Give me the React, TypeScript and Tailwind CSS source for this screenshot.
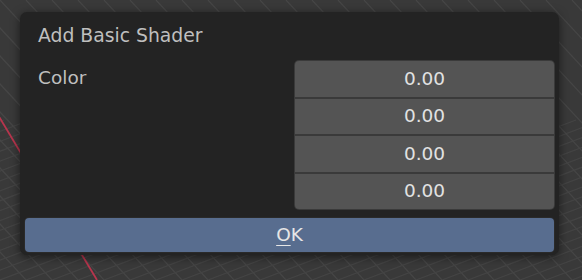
import React from "react"

const values = ["0.00", "0.00", "0.00", "0.00"]

function ViewportGrid() {
    // perspective floor grid, drawn behind the popup
    const a: React.ReactElement[] = []
    for (let i = -30; i < 40; i++) {
        const x = i * 26
        a.push(<line key={"a" + i} x1={x} y1={0} x2={x + 260} y2={280} stroke="#464646" strokeWidth={1.2} />)
        a.push(<line key={"b" + i} x1={x} y1={280} x2={x + 420} y2={120} stroke="#444444" strokeWidth={1.2} />)
    }
    return (
        <svg className="absolute inset-0" width={582} height={280}>
            <rect width={582} height={280} fill="#393939" />
            {a}
            <line x1={-71} y1={0} x2={97} y2={280} stroke="#b8354d" strokeWidth={1.8} />
        </svg>
    )
}

export default function App() {
    return (
        <div
            className="relative w-[582px] h-[280px] overflow-hidden"
            style={{ fontFamily: '"DejaVu Sans", sans-serif' }}
        >
            <ViewportGrid />
            <div className="relative pt-[12px] pl-[20px]">
                <div className="w-[539px] h-[243px] rounded-[7px] bg-[#232323] shadow-[0_2px_10px_rgba(0,0,0,0.55)] px-[4px] pt-[10px] flex flex-col">
                    <div className="pl-[14px] h-[27px] leading-[27px] text-[18.8px] text-[#bfbfbf]">
                        Add Basic Shader
                    </div>
                    <div className="flex mt-[11px]">
                        <div className="flex-1 pl-[14px] pt-[6px] text-[18.5px] leading-[24px] text-[#bfbfbf]">Color</div>
                        <div className="w-[261px] h-[150px] rounded-[5px] bg-[#3a3a3a] p-[1px] flex flex-col gap-[2px]">
                            {values.map((v, i) => (
                                <div
                                    key={i}
                                    className={
                                        "flex-1 bg-[#545454] flex items-center justify-center text-[18.5px] text-[#e2e2e2] " +
                                        (i === 0 ? "rounded-t-[4px]" : "") +
                                        (i === 3 ? "rounded-b-[4px]" : "")
                                    }
                                >
                                    {v}
                                </div>
                            ))}
                        </div>
                    </div>
                    <div className="mt-[7px] h-[36px] rounded-[5px] bg-[#2a2a2a] p-[1px]">
                        <div className="h-full rounded-[4px] bg-[#586d8f] flex items-center justify-center text-[18.5px] text-[#e6e6e6]">
                            <span className="underline underline-offset-[4px] decoration-1">O</span>K
                        </div>
                    </div>
                </div>
            </div>
        </div>
    )
}
